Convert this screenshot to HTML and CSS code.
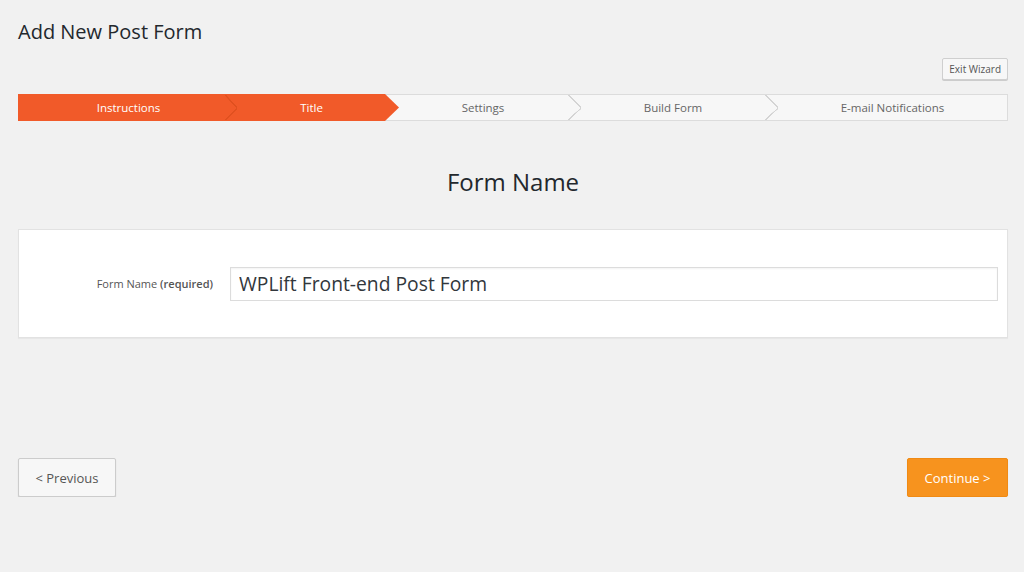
FILE: index.html
```html
<!DOCTYPE html>
<html lang="en">
<head>
<meta charset="utf-8">
<title>Add New Post Form</title>
<link rel="stylesheet" href="styles.css">
</head>
<body>
<div class="wrap">
  <h1 class="page-title">Add New Post Form</h1>

  <div class="toolbar">
    <button class="btn-exit" type="button">Exit Wizard</button>
  </div>

  <ol class="steps">
    <li class="step done s1"><span>Instructions</span></li>
    <li class="step current s2"><span>Title</span></li>
    <li class="step s3"><span>Settings</span></li>
    <li class="step s4"><span>Build Form</span></li>
    <li class="step last s5"><span>E-mail Notifications</span></li>
  </ol>

  <h2 class="section-title">Form Name</h2>

  <div class="card">
    <label class="field-label" for="form-name">Form Name <b>(required)</b></label>
    <input class="field-input" id="form-name" type="text" value="WPLift Front-end Post Form">
  </div>

  <div class="nav">
    <button class="btn-prev" type="button">&lt; Previous</button>
    <button class="btn-next" type="button">Continue &gt;</button>
  </div>
</div>
</body>
</html>
```

FILE: styles.css
```css
* { box-sizing: border-box; }

html, body {
  margin: 0;
  background: #f1f1f1;
  font-family: "Open Sans", "Noto Sans", "Liberation Sans", sans-serif;
  color: #23282d;
}

.wrap {
  padding: 18px 16px 0 18px;
}

.page-title {
  margin: 0;
  font-size: 20px;
  line-height: 28px;
  font-weight: 400;
  color: #23282d;
}

.toolbar {
  display: flex;
  justify-content: flex-end;
  margin-top: 12px;
}

.btn-exit {
  height: 22px;
  padding: 0 6px;
  font-family: inherit;
  font-size: 10px;
  color: #555;
  background: #f7f7f7;
  border: 1px solid #cfcfcf;
  border-radius: 2px;
  box-shadow: 0 1px 0 #ccc;
}

/* wizard progress bar */
.steps {
  display: flex;
  list-style: none;
  margin: 14px 0 0;
  padding: 0;
  height: 27px;
}

.step {
  position: relative;
  display: flex;
  align-items: center;
  justify-content: center;
  height: 27px;
  padding-left: 13px;
  font-size: 11.5px;
  color: #666;
  background: #f7f7f7;
  border-top: 1px solid #dcdcdc;
  border-bottom: 1px solid #dcdcdc;
}

.step span { position: relative; z-index: 2; }

.s1 { width: 207px; border-left: 1px solid #dcdcdc; }
.s2 { width: 160px; }
.s3 { width: 183px; }
.s4 { width: 197px; }
.s5 { flex: 1; border-right: 1px solid #dcdcdc; }

.step.done,
.step.current {
  background: #f15a29;
  border-color: #f15a29;
  color: #fff;
}

/* chevron between two grey steps */
.step::after {
  content: "";
  position: absolute;
  z-index: 1;
  right: -13px;
  top: 0;
  width: 13px;
  height: 25px;
  background:
    linear-gradient(to top right, transparent 47%, #d4d4d4 48%, #d4d4d4 54%, transparent 55%) top / 13px 13px no-repeat,
    linear-gradient(to bottom right, transparent 47%, #d4d4d4 48%, #d4d4d4 54%, transparent 55%) bottom / 13px 12px no-repeat;
}

.step.last::after { display: none; }

/* faint seam between the two finished steps */
.step.done::after {
  right: -12px;
  width: 12px;
  background:
    linear-gradient(to top right, transparent 46%, #e0501f 48%, #e0501f 54%, transparent 56%) top / 12px 13px no-repeat,
    linear-gradient(to bottom right, transparent 46%, #e0501f 48%, #e0501f 54%, transparent 56%) bottom / 12px 12px no-repeat;
}

/* solid orange arrow head of the current step */
.step.current::after {
  right: -14px;
  top: -1px;
  width: 14px;
  height: 27px;
  background: #f15a29;
  clip-path: polygon(0 0, 100% 50%, 0 100%);
}

.section-title {
  margin: 45px 0 0;
  text-align: center;
  font-size: 24px;
  line-height: 32px;
  font-weight: 400;
  color: #23282d;
}

.card {
  display: flex;
  align-items: center;
  margin-top: 31px;
  height: 109px;
  background: #fff;
  border: 1px solid #e2e2e2;
  box-shadow: 0 1px 1px rgba(0, 0, 0, 0.04);
  padding: 0 9px 0 0;
}

.field-label {
  width: 211px;
  padding-right: 17px;
  text-align: right;
  font-size: 11px;
  color: #555;
}

.field-label b { font-weight: 600; }

.field-input {
  flex: 1;
  height: 34px;
  padding: 0 8px;
  font-family: inherit;
  font-size: 19.3px;
  color: #32373c;
  background: #fff;
  border: 1px solid #dcdcdc;
  box-shadow: inset 0 1px 2px rgba(0, 0, 0, 0.05);
  outline: none;
}

.nav {
  display: flex;
  justify-content: space-between;
  margin-top: 120px;
}

.btn-prev,
.btn-next {
  height: 39px;
  font-family: inherit;
  font-size: 13px;
  border-radius: 2px;
}

.btn-prev {
  width: 98px;
  color: #555;
  background: #f7f7f7;
  border: 1px solid #cccccc;
  box-shadow: 0 1px 1px #c8c8c8;
}

.btn-next {
  width: 101px;
  color: #fff;
  background: #f7931e;
  border: 1px solid #f08a14;
  box-shadow: 0 1px 1px #e0e0e0;
}
```
